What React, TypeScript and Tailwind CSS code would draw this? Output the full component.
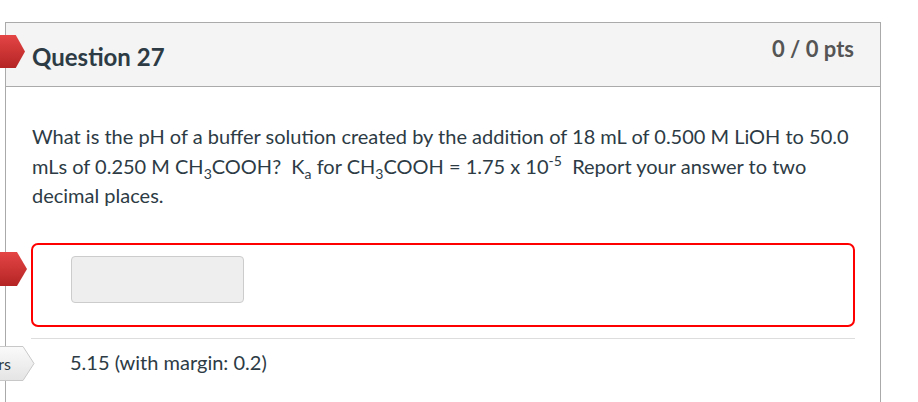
import React from "react";

function Flag({ className, grey }: { className: string; grey?: boolean }) {
  if (grey) {
    return (
      <svg className={className} viewBox="0 0 35 35" preserveAspectRatio="none">
        <defs>
          <linearGradient id="gf" x1="0" y1="0" x2="0" y2="1">
            <stop offset="0" stopColor="#fafafa" />
            <stop offset="1" stopColor="#e4e4e4" />
          </linearGradient>
        </defs>
        <path d="M-2 0.5 H23 L34 17.5 L23 34.5 H-2 Z" fill="url(#gf)" stroke="#c8c8c8" strokeWidth="1" />
      </svg>
    );
  }
  return (
    <svg className={className} viewBox="0 0 27 34" preserveAspectRatio="none">
      <defs>
        <linearGradient id="rf" x1="0" y1="0" x2="0" y2="1">
          <stop offset="0" stopColor="#e54545" />
          <stop offset="1" stopColor="#b42424" />
        </linearGradient>
      </defs>
      <path d="M0 0 H17 L27 17 L17 34 H0 Z" fill="url(#rf)" />
    </svg>
  );
}

const sub = "align-[-5px] text-[14px] leading-[0]";
const sup = "align-[8px] text-[14px] leading-[0]";

export default function App() {
  return (
    <div className="relative w-[918px] h-[402px] overflow-hidden bg-white font-['Lato','Liberation_Sans',sans-serif] text-[#2d3b45]">
      <div className="ml-[5px] mt-[22px] w-[876px] h-[380px] border-x border-t border-[#aaaaaa]">
        {/* header */}
        <div className="h-[64px] bg-[#f4f4f4] border-b border-[#aaaaaa] flex items-start justify-between px-[26px]">
          <h2 className="mt-[19px] text-[24px] leading-[30px] font-bold text-[#2d3b45]">Question 27</h2>
          <div className="mt-[12px] text-[22px] leading-[28px] font-bold text-[#555555]">0 / 0 pts</div>
        </div>

        {/* body */}
        <div className="pl-[25px] pr-[25px] pt-[35px] flex flex-col">
          <p className="ml-[1px] text-[20px] leading-[29.5px] w-[824px]">
            What is the pH of a buffer solution created by the addition of 18 mL of 0.500 M LiOH to 50.0 mLs of 0.250 M CH
            <span className={sub}>3</span>COOH?&nbsp; K<span className={sub}>a</span> for CH
            <span className={sub}>3</span>COOH = 1.75 x 10<span className={sup}>-5</span>&nbsp; Report your answer to two decimal places.
          </p>

          <div className="mt-[32px] h-[84px] w-[824px] border-2 border-[#ff0000] rounded-[7px] pl-[38px] pt-[11px]">
            <div className="w-[173px] h-[47px] bg-[#eeeeee] border border-[#cccccc] rounded-[4px]" />
          </div>

          <div className="mt-[11px] w-[824px] border-t border-[#dddddd]" />
          <div className="pl-[39px] pt-[8px] text-[20px] leading-[30px]">5.15 (with margin: 0.2)</div>
        </div>
      </div>

      {/* question / answer flags hanging over the left edge */}
      <Flag className="absolute left-0 top-[35px] w-[25px] h-[33px]" />
      <Flag className="absolute left-0 top-[252px] w-[27px] h-[34px]" />
      <div className="absolute left-0 top-[346px] w-[35px] h-[35px] flex items-center justify-end">
        <Flag grey className="absolute inset-0 w-[35px] h-[35px]" />
        <span className="relative mr-[24px] text-[16px] leading-[20px] whitespace-nowrap text-[#2d3b45]">Correct Answers</span>
      </div>
    </div>
  );
}
